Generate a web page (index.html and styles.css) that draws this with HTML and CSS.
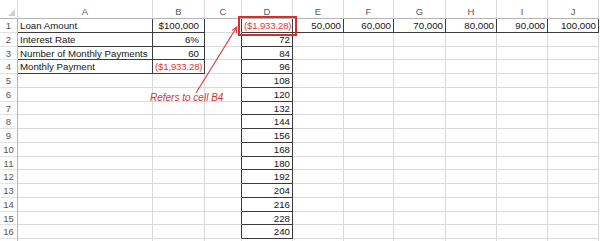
FILE: index.html
```html
<!DOCTYPE html>
<html>
<head>
<meta charset="utf-8">
<link rel="stylesheet" href="styles.css">
</head>
<body>
<div class="sheet">
  <div class="grid">
    <div class="h corner"><svg width="7" height="7" viewBox="0 0 7 7"><polygon points="7,0 7,7 0,7" fill="#d0d0d0"/></svg></div>
    <div class="h">A</div><div class="h">B</div><div class="h">C</div><div class="h">D</div><div class="h">E</div><div class="h">F</div><div class="h">G</div><div class="h">H</div><div class="h">I</div><div class="h">J</div>

    <div class="n">1</div><div class="c k">Loan Amount</div><div class="c k r cur">$100,000</div><div class="c kr"></div><div class="c k r neg d1">($1,933.28)<span class="box"></span></div><div class="c k r">50,000</div><div class="c k r">60,000</div><div class="c k r">70,000</div><div class="c k r">80,000</div><div class="c k r">90,000</div><div class="c k r">100,000</div>

    <div class="n">2</div><div class="c k">Interest Rate</div><div class="c k r cur">6%</div><div class="c kr"></div><div class="c k r">72</div><div class="c"></div><div class="c"></div><div class="c"></div><div class="c"></div><div class="c"></div><div class="c"></div>

    <div class="n">3</div><div class="c k">Number of Monthly Payments</div><div class="c k r cur">60</div><div class="c kr"></div><div class="c k r">84</div><div class="c"></div><div class="c"></div><div class="c"></div><div class="c"></div><div class="c"></div><div class="c"></div>

    <div class="n">4</div><div class="c k">Monthly Payment</div><div class="c k r neg">($1,933.28)</div><div class="c kr"></div><div class="c k r">96</div><div class="c"></div><div class="c"></div><div class="c"></div><div class="c"></div><div class="c"></div><div class="c"></div>

    <div class="n">5</div><div class="c"></div><div class="c"></div><div class="c kr"></div><div class="c k r">108</div><div class="c"></div><div class="c"></div><div class="c"></div><div class="c"></div><div class="c"></div><div class="c"></div>

    <div class="n">6</div><div class="c"></div><div class="c"></div><div class="c kr"></div><div class="c k r">120</div><div class="c"></div><div class="c"></div><div class="c"></div><div class="c"></div><div class="c"></div><div class="c"></div>

    <div class="n">7</div><div class="c"></div><div class="c"></div><div class="c kr"></div><div class="c k r">132</div><div class="c"></div><div class="c"></div><div class="c"></div><div class="c"></div><div class="c"></div><div class="c"></div>

    <div class="n">8</div><div class="c"></div><div class="c"></div><div class="c kr"></div><div class="c k r">144</div><div class="c"></div><div class="c"></div><div class="c"></div><div class="c"></div><div class="c"></div><div class="c"></div>

    <div class="n">9</div><div class="c"></div><div class="c"></div><div class="c kr"></div><div class="c k r">156</div><div class="c"></div><div class="c"></div><div class="c"></div><div class="c"></div><div class="c"></div><div class="c"></div>

    <div class="n">10</div><div class="c"></div><div class="c"></div><div class="c kr"></div><div class="c k r">168</div><div class="c"></div><div class="c"></div><div class="c"></div><div class="c"></div><div class="c"></div><div class="c"></div>

    <div class="n">11</div><div class="c"></div><div class="c"></div><div class="c kr"></div><div class="c k r">180</div><div class="c"></div><div class="c"></div><div class="c"></div><div class="c"></div><div class="c"></div><div class="c"></div>

    <div class="n">12</div><div class="c"></div><div class="c"></div><div class="c kr"></div><div class="c k r">192</div><div class="c"></div><div class="c"></div><div class="c"></div><div class="c"></div><div class="c"></div><div class="c"></div>

    <div class="n">13</div><div class="c"></div><div class="c"></div><div class="c kr"></div><div class="c k r">204</div><div class="c"></div><div class="c"></div><div class="c"></div><div class="c"></div><div class="c"></div><div class="c"></div>

    <div class="n">14</div><div class="c"></div><div class="c"></div><div class="c kr"></div><div class="c k r">216</div><div class="c"></div><div class="c"></div><div class="c"></div><div class="c"></div><div class="c"></div><div class="c"></div>

    <div class="n">15</div><div class="c"></div><div class="c"></div><div class="c kr"></div><div class="c k r">228</div><div class="c"></div><div class="c"></div><div class="c"></div><div class="c"></div><div class="c"></div><div class="c"></div>

    <div class="n">16</div><div class="c"></div><div class="c"></div><div class="c kr"></div><div class="c k r">240</div><div class="c"></div><div class="c"></div><div class="c"></div><div class="c"></div><div class="c"></div><div class="c"></div>

    <div class="n"></div><div class="c"></div><div class="c"></div><div class="c"></div><div class="c"></div><div class="c"></div><div class="c"></div><div class="c"></div><div class="c"></div><div class="c"></div><div class="c"></div>
  </div>

  <svg class="arrow" width="600" height="241" viewBox="0 0 600 241">
    <line x1="196" y1="93" x2="236.5" y2="27.5" stroke="#d8343a" stroke-width="1.1"/>
    <polyline points="232,30.4 236.8,27.2 236.4,33" fill="none" stroke="#d8343a" stroke-width="1.1"/>
  </svg>
  <span class="note">Refers to cell B4</span>
</div>
</body>
</html>
```

FILE: styles.css
```css
html, body {
  margin: 0;
  padding: 0;
  background: #ffffff;
  overflow: hidden;
}

.sheet {
  position: relative;
  width: 600px;
  height: 241px;
  overflow: hidden;
  font-family: "Liberation Sans", Arial, sans-serif;
}

.grid {
  display: grid;
  grid-template-columns: 18px 135px 52px 37px 51px 51px 50px 52px 51px 51px 51px;
  grid-template-rows: 19px repeat(17, 13.75px);
}

.grid > div {
  box-sizing: border-box;
  border-right: 1px solid #dadada;
  border-bottom: 1px solid #dadada;
  white-space: nowrap;
  overflow: visible;
}

.h {
  font-size: 9.5px;
  color: #5a5a5a;
  text-align: center;
  padding-top: 5px;
  line-height: 13px;
  border-bottom-color: #b4b4b4 !important;
  border-right-color: #dcdcdc;
}

.corner {
  display: flex;
  justify-content: flex-end;
  align-items: flex-end;
  padding: 0 2px 2px 0;
}

.n {
  font-size: 9.5px;
  color: #555555;
  text-align: center;
  line-height: 13px;
  border-right-color: #b4b4b4 !important;
  border-bottom-color: #e2e2e2 !important;
}

.c {
  font-size: 9.7px;
  color: #151515;
  line-height: 13px;
  padding: 0 2px 0 2px;
}

.r {
  text-align: right;
}

.cur {
  padding-right: 5px;
}

.neg {
  color: #e5383b;
  letter-spacing: -0.2px;
}

.grid > .k {
  border-right-color: #3c3c3c;
  border-bottom-color: #3c3c3c;
}

.grid > .kr {
  border-right-color: #3c3c3c;
}

.d1 {
  position: relative;
}

.box {
  position: absolute;
  left: -4px;
  top: -3px;
  width: 59px;
  height: 19.5px;
  box-sizing: border-box;
  border: 2px solid #d4302f;
}

.arrow {
  position: absolute;
  left: 0;
  top: 0;
  pointer-events: none;
}

.note {
  position: absolute;
  left: 150px;
  top: 92px;
  font-family: "Liberation Sans", Arial, sans-serif;
  font-style: italic;
  font-size: 10px;
  line-height: 12px;
  color: #d8343a;
  white-space: nowrap;
}
```
